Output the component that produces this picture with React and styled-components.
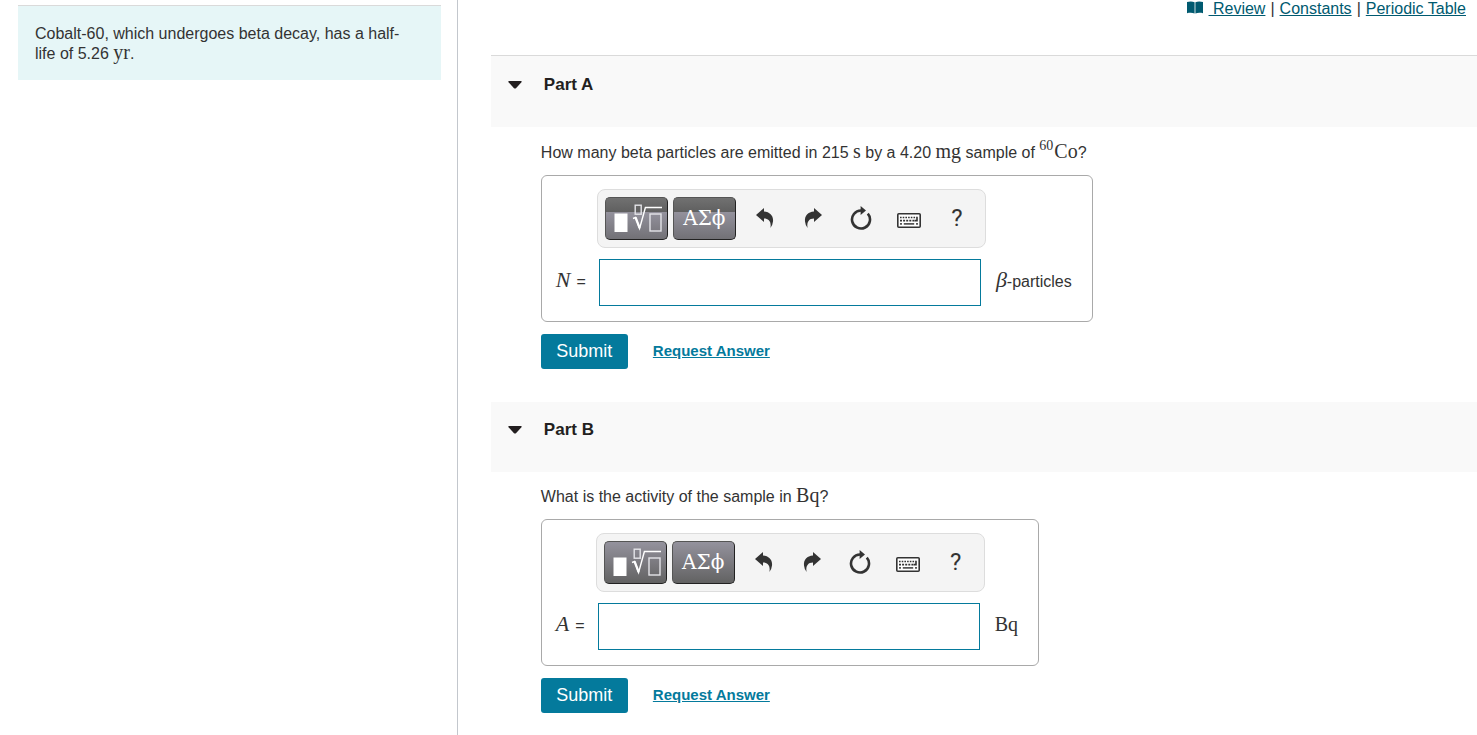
import React, { useState } from "react";
import styled, { createGlobalStyle } from "styled-components";

const GlobalStyle = createGlobalStyle`
  * {
    box-sizing: border-box;
  }
  body {
    margin: 0;
    background: #fff;
    color: #333;
    font-family: "Liberation Sans", Arial, sans-serif;
    font-size: 16px;
    line-height: 20px;
  }
`;

const UndoIcon = () => (
  <svg width="18" height="20" viewBox="0 0 18 20" fill="#333" aria-hidden="true">
    <path d="M0 7 L8 0 V3.6 C14 4 17.6 8 17 13.5 Q16.6 17.5 14.4 20 C15.6 13.8 12.8 10.6 8 10.6 V14 Z" />
  </svg>
);

const RedoIcon = () => (
  <svg width="18" height="20" viewBox="0 0 18 20" fill="#333" aria-hidden="true">
    <path d="M18 7 L10 0 V3.6 C4 4 0.4 8 1 13.5 Q1.4 17.5 3.6 20 C2.4 13.8 5.2 10.6 10 10.6 V14 Z" />
  </svg>
);

const ResetIcon = () => (
  <svg width="22" height="24" viewBox="0 0 22 24" aria-hidden="true">
    <path d="M11 4.5 A9 9 0 1 0 17.8 7.6" fill="none" stroke="#333" strokeWidth="2.6" />
    <path d="M10.6 0 L16 4.6 L10.6 9 Z" fill="#333" />
  </svg>
);

const KeyboardIcon = () => (
  <svg width="24" height="20" viewBox="0 -5 24 20" aria-hidden="true">
    <rect x="0.8" y="0.8" width="22.4" height="13.4" rx="1" fill="#fff" stroke="#333" strokeWidth="1.6" />
    <path d="M3 4.5 H19.5" stroke="#333" strokeWidth="1.6" strokeDasharray="1.6 1.1" />
    <path d="M3 7.6 H18" stroke="#333" strokeWidth="1.6" strokeDasharray="2 1.1" />
    <path d="M20 3.7 V7.6 H17.6" fill="none" stroke="#333" strokeWidth="1.6" />
    <path d="M3 10.9 H5 M6.8 10.9 H17.2 M19 10.9 H21" stroke="#555" strokeWidth="1.8" />
  </svg>
);

const TemplateIcon = () => (
  <svg width="61" height="41" viewBox="1 1 61 41" aria-hidden="true">
    <rect x="9.5" y="16.5" width="13" height="18.5" fill="#fff" />
    <g fill="none" stroke="#e4e4e8" strokeWidth="1.4">
      <rect x="30.2" y="8.2" width="6" height="9" />
      <rect x="45" y="17" width="11" height="17" />
    </g>
    <path d="M28 21.5 L30.6 20.5 L34.6 31.5 L40.4 10.5 H57" fill="none" stroke="#fff" strokeWidth="1.4" />
    <path d="M30.6 20.5 L34.6 31" stroke="#fff" strokeWidth="2.2" />
  </svg>
);

const BookIcon = () => (
  <svg width="16" height="13" viewBox="0 0 16 13" fill="#005a70" aria-hidden="true">
    <path d="M0 1 C2.5 0.3 5.5 0.3 7.6 1.2 V12.4 C5.5 11.6 2.5 11.6 0 12.2 Z" />
    <path d="M16 1 C13.5 0.3 10.5 0.3 8.4 1.2 V12.4 C10.5 11.6 13.5 11.6 16 12.2 Z" />
  </svg>
);

const AnswerBox = ({ id, symbol, unit, glossy }) => {
  const [value, setValue] = useState("");

  return (
    <Answer>
      <Toolbar>
        <DarkButton type="button" $glossy={glossy} aria-label="Templates">
          <TemplateIcon />
        </DarkButton>
        <DarkButton type="button" $glossy={glossy}>
          ΑΣϕ
        </DarkButton>
        <ToolGroup>
          <ToolButton type="button" aria-label="Undo">
            <UndoIcon />
          </ToolButton>
          <ToolButton type="button" aria-label="Redo">
            <RedoIcon />
          </ToolButton>
          <ToolButton type="button" aria-label="Reset">
            <ResetIcon />
          </ToolButton>
          <ToolButton type="button" aria-label="Keyboard shortcuts">
            <KeyboardIcon />
          </ToolButton>
          <ToolButton type="button">?</ToolButton>
        </ToolGroup>
      </Toolbar>
      <Label htmlFor={id}>
        <Variable>{symbol}</Variable>
        <span>=</span>
      </Label>
      <Field id={id} type="text" value={value} onChange={(e) => setValue(e.target.value)} />
      <Unit>{unit}</Unit>
    </Answer>
  );
};

const Part = ({ title, first, question, ...answer }) => {
  const [open, setOpen] = useState(true);

  return (
    <section>
      <PartHeader $first={first}>
        <Toggle type="button" aria-expanded={open} onClick={() => setOpen(!open)}>
          <svg width="14" height="8" viewBox="0 0 14 8" fill="#231f20" aria-hidden="true">
            <path d="M1 0 H13 Q14.2 0.3 13.4 1.2 L8 7.2 Q7 8 6 7.2 L0.6 1.2 Q-0.2 0.3 1 0 Z" />
          </svg>
          {title}
        </Toggle>
      </PartHeader>
      {open && (
        <PartBody>
          <Question>{question}</Question>
          <AnswerBox {...answer} />
          <Actions>
            <Submit type="button">Submit</Submit>
            <RequestLink href="#">Request Answer</RequestLink>
          </Actions>
        </PartBody>
      )}
    </section>
  );
};

const App = () => {
  return (
    <Page>
      <GlobalStyle />
      <Sidebar>
        <Intro>
          Cobalt-60, which undergoes beta decay, has a half-life of 5.26 <Math>yr</Math>.
        </Intro>
      </Sidebar>
      <Main>
        <Resources>
          <BookIcon />
          <ReviewLink href="#">&nbsp;Review</ReviewLink>
          <span>|</span>
          <a href="#">Constants</a>
          <span>|</span>
          <a href="#">Periodic Table</a>
        </Resources>
        <Part
          first
          glossy
          title="Part A"
          id="answer-a"
          question={
            <>
              How many beta particles are emitted in 215 <Math>s</Math> by a 4.20 <Math>mg</Math> sample of{" "}
              <Math>
                <sup>60</sup>Co
              </Math>
              ?
            </>
          }
          symbol="N"
          unit={
            <>
              <Variable>β</Variable>-particles
            </>
          }
        />
        <Part
          title="Part B"
          id="answer-b"
          question={
            <>
              What is the activity of the sample in <Math>Bq</Math>?
            </>
          }
          symbol="A"
          unit={<Math>Bq</Math>}
        />
      </Main>
    </Page>
  );
};

const Page = styled.div`
  display: flex;
  min-height: 100vh;
`;

const Sidebar = styled.aside`
  flex: 0 0 31%;
  padding: 5px 16px 0 18px;
  border-right: 1px solid #c3c7cd;
`;

const Intro = styled.div`
  padding: 18px 32px 16px 17px;
  border-top: 1px solid #dadada;
  background: #e6f6f7;
`;

const Math = styled.span`
  font-family: "Liberation Serif", "Times New Roman", serif;
  font-size: 20px;
  line-height: 16px;
  & sup {
    margin-right: 1px;
    font-size: 14px;
    line-height: 8px;
  }
`;

const Variable = styled(Math)`
  font-size: 22px;
  font-style: italic;
`;

const Main = styled.main`
  flex: 1;
  min-width: 0;
  padding-left: 33px;
`;

const Resources = styled.nav`
  display: flex;
  justify-content: flex-end;
  gap: 5px;
  height: 55px;
  padding-right: 11px;
  line-height: 18px;
  & a {
    color: #005a70;
  }
  & svg {
    margin-top: 1px;
  }
`;

const ReviewLink = styled.a`
  margin-left: 1px;
`;

const PartHeader = styled.h2`
  margin: 0;
  padding: ${({ $first }) => ($first ? "18px 17px 31px" : "17px 17px 31px")};
  border-top: ${({ $first }) => ($first ? "1px solid #dadada" : "none")};
  background: #f9f9f9;
  line-height: 22px;
`;

const Toggle = styled.button`
  display: flex;
  align-items: center;
  gap: 22px;
  height: 22px;
  padding: 0;
  border: none;
  background: none;
  color: #231f20;
  font: bold 17px "Liberation Sans", Arial, sans-serif;
  cursor: pointer;
`;

const PartBody = styled.div`
  padding: 15px 16px 33px 50px;
`;

const Question = styled.p`
  margin: 0 0 12px;
`;

const Answer = styled.div`
  display: grid;
  grid-template-columns: auto 389px auto;
  align-items: center;
  gap: 11px 10px;
  width: fit-content;
  padding: 13px 20px 15px 14px;
  border: 1px solid #a9a9a9;
  border-radius: 6px;
`;

const Toolbar = styled.div`
  grid-column: 2;
  display: flex;
  align-items: center;
  gap: 5px;
  height: 59px;
  padding: 0 2px 0 7px;
  border: 1px solid #ddd;
  border-radius: 8px;
  background: #f4f4f4;
`;

const DarkButton = styled.button`
  display: flex;
  flex-shrink: 0;
  align-items: center;
  justify-content: center;
  width: 63px;
  height: 43px;
  padding: 0;
  border: 1px solid #555;
  border-right-color: #222;
  border-bottom-color: #222;
  border-radius: 5px;
  background: ${({ $glossy }) =>
    $glossy
      ? "linear-gradient(#717171, #5f5f5f 35%, #93919c 35%, #727176)"
      : "linear-gradient(#94929d, #626262)"};
  color: #fff;
  font: 20px "DejaVu Serif", serif;
`;

const ToolGroup = styled.div`
  display: flex;
`;

const ToolButton = styled.button`
  display: flex;
  align-items: center;
  justify-content: center;
  width: 48px;
  height: 43px;
  padding: 0;
  border: none;
  background: none;
  color: #333;
  font: 24px Roboto, sans-serif;
`;

const Label = styled.label`
  grid-column: 1;
  display: flex;
  align-items: baseline;
  gap: 6px;
  padding-right: 1px;
`;

const Field = styled.input`
  width: 382px;
  height: 47px;
  margin-left: 2px;
  padding: 0 10px;
  border: 1px solid #047a9c;
  font-size: 20px;
`;

const Unit = styled.span`
  grid-column: 3;
`;

const Actions = styled.div`
  display: flex;
  align-items: center;
  gap: 25px;
  margin-top: 12px;
`;

const Submit = styled.button`
  width: 87px;
  height: 35px;
  padding: 0;
  border: none;
  border-radius: 3px;
  background: #047a9c;
  color: #fff;
  font: 18px "Liberation Sans", Arial, sans-serif;
  cursor: pointer;
`;

const RequestLink = styled.a`
  color: #047a9c;
  font-size: 15px;
  font-weight: bold;
`;

export default App;
